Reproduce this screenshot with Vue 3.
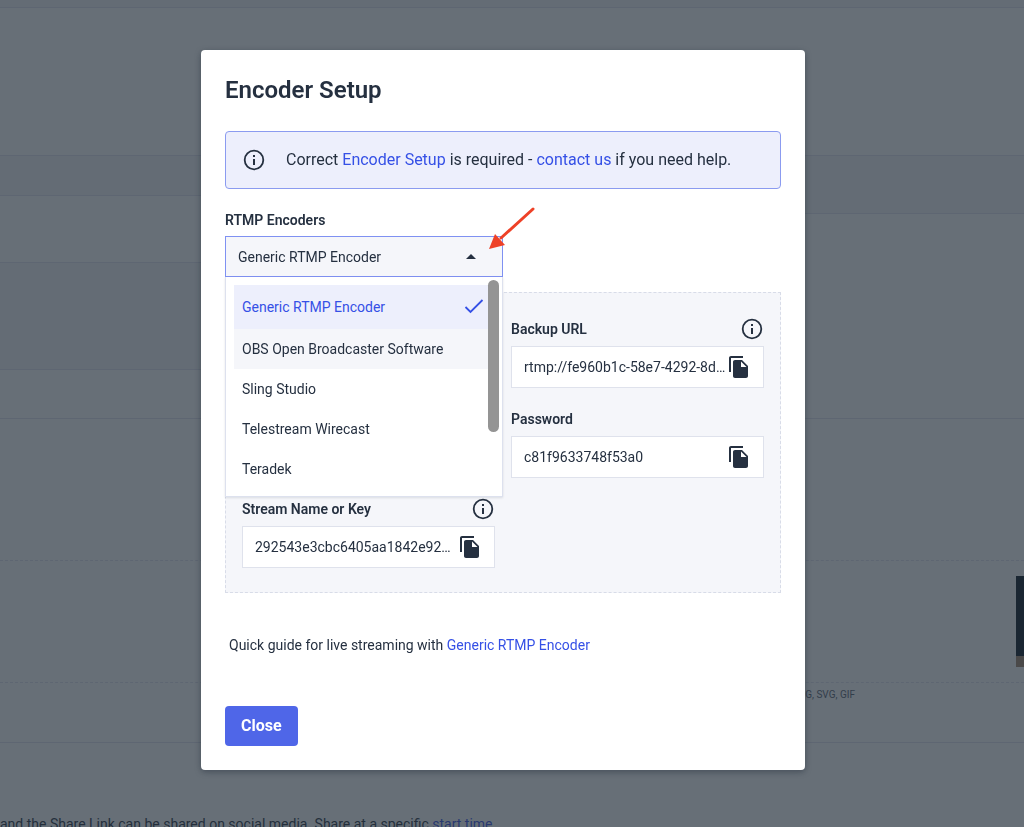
<script setup>
import { ref } from 'vue'

const encoders = [
  'Generic RTMP Encoder',
  'OBS Open Broadcaster Software',
  'Sling Studio',
  'Telestream Wirecast',
  'Teradek'
]
const selected = ref(encoders[0])
const hovered = ref(encoders[1])

const fields = [
  { id: 'backup', label: 'Backup URL', value: 'rtmp://fe960b1c-58e7-4292-8d…', info: true },
  { id: 'password', label: 'Password', value: 'c81f9633748f53a0', info: false },
  { id: 'stream', label: 'Stream Name or Key', value: '292543e3cbc6405aa1842e92…', info: true }
]
</script>

<template>
  <div class="screen">
    <div class="page">
      <div class="strip tint"></div>
      <div class="strip intro"></div>
      <div class="columns">
        <div class="column">
          <div class="strip row-a tint"></div>
          <div class="strip row-b"></div>
          <div class="strip row-c tint"></div>
          <div class="strip row-d"></div>
        </div>
        <div class="column">
          <div class="strip row-e tint"></div>
          <div class="strip row-f"></div>
        </div>
      </div>
      <div class="strip dashed row-g"></div>
      <div class="strip dashed media"><div class="thumb"></div></div>
      <div class="strip formats"><span>G, SVG, GIF</span></div>
      <p class="share">and the Share Link can be shared on social media. Share at a specific <a href="#">start time</a></p>
    </div>

    <div class="overlay">
      <section class="modal" role="dialog" aria-modal="true" aria-labelledby="dialog-title">
        <h1 id="dialog-title">Encoder Setup</h1>

        <div class="notice">
          <svg class="icon" viewBox="0 0 24 24" aria-hidden="true">
            <circle cx="12" cy="12" r="9.300" fill="none" stroke="currentColor" stroke-width="1.800" />
            <path d="M11 7h2v2h-2zM11 11h2v6h-2z" fill="currentColor" />
          </svg>
          <p>Correct <a href="#">Encoder Setup</a> is required - <a href="#">contact us</a> if you need help.</p>
        </div>

        <label class="label" for="encoder">RTMP Encoders</label>
        <div class="picker">
          <select id="encoder" v-model="selected">
            <option v-for="name in encoders" :key="name">{{ name }}</option>
          </select>
          <svg class="caret" viewBox="0 0 10 5" aria-hidden="true"><path d="M0 5l5-5 5 5z" fill="currentColor" /></svg>
          <div class="menu">
            <ul>
              <li v-for="name in encoders" :key="name">
                <button
                  type="button"
                  class="choice"
                  :class="{ chosen: name === selected, hovered: name === hovered && name !== selected }"
                  @mouseenter="hovered = name"
                  @click="selected = name"
                >
                  <span>{{ name }}</span>
                  <svg v-if="name === selected" class="icon" viewBox="0 0 24 24" aria-hidden="true">
                    <path d="M3.500 12l5 5L20.500 5" fill="none" stroke="currentColor" stroke-width="1.800" />
                  </svg>
                </button>
              </li>
            </ul>
            <div class="thumb-bar"></div>
          </div>
          <svg class="arrow" viewBox="0 0 46 44" aria-hidden="true">
            <path d="M44 2L12 31" stroke="#ee4127" stroke-width="3" stroke-linecap="round" />
            <path d="M0 42L6 27L16 38z" fill="#ee4127" />
          </svg>
        </div>

        <div class="panel">
          <div v-for="field in fields" :key="field.id" class="field" :class="field.id">
            <div class="field-head">
              <label class="label" :for="field.id">{{ field.label }}</label>
              <button v-if="field.info" type="button" class="icon-button" :aria-label="'About ' + field.label">
                <svg class="icon" viewBox="0 0 24 24">
                  <circle cx="12" cy="12" r="9.300" fill="none" stroke="currentColor" stroke-width="1.800" />
                  <path d="M11 7h2v2h-2zM11 11h2v6h-2z" fill="currentColor" />
                </svg>
              </button>
            </div>
            <div class="box">
              <input :id="field.id" type="text" readonly :value="field.value" />
              <button type="button" class="icon-button" :aria-label="'Copy ' + field.label">
                <svg class="icon" viewBox="0 0 24 24">
                  <path fill="currentColor" d="M16 1H4c-1.100 0-2 .9-2 2v14h2V3h12V1zm-1 4l6 6v10c0 1.100-.9 2-2 2H7.990C6.890 23 6 22.100 6 21l.01-14c0-1.100.89-2 1.990-2h7zm-1 7h5.500L14 6.500V12z" />
                </svg>
              </button>
            </div>
          </div>
        </div>

        <p class="guide">Quick guide for live streaming with <a href="#">{{ selected }}</a></p>

        <button type="button" class="close">Close</button>
      </section>
    </div>
  </div>
</template>

<style>
body {
  margin: 0;
}
</style>

<style scoped>
* {
  box-sizing: border-box;
}

.screen {
  height: 100vh;
  overflow: hidden;
  font-family: Roboto, "Liberation Sans", sans-serif;
  font-size: 14px;
  line-height: 20px;
  color: #253040;
}

h1,
p,
ul {
  margin: 0;
  padding: 0;
}

a {
  color: #3550e6;
  text-decoration: none;
}

button,
input,
select {
  font: inherit;
  color: inherit;
}

.icon {
  display: block;
  flex: none;
  width: 24px;
  height: 24px;
}

.page {
  height: 100%;
  overflow: hidden;
  background: #fff;
}

.strip {
  min-height: 8px;
  border-bottom: 1px solid #e2e2ee;
}

.tint {
  background: #f5f6f8;
}

.dashed {
  border-bottom-style: dashed;
}

.columns {
  display: grid;
  grid-template-columns: 1fr 1fr;
}

.intro { height: 148px; }
.row-a { height: 40px; }
.row-b { height: 67px; }
.row-c { height: 107px; }
.row-d { height: 49px; }
.row-e { height: 58px; }
.row-f { height: 205px; }
.row-g { height: 142px; }

.media {
  display: flex;
  justify-content: flex-end;
  padding: 15px 0;
}

.thumb {
  width: 8px;
  height: 91px;
  background: linear-gradient(#06121e 80px, #a08468 80px);
}

.formats {
  height: 60px;
  padding: 2px 169px 0 0;
  text-align: right;
  font-size: 10px;
  color: #566070;
}

.share {
  margin-top: 71px;
  white-space: nowrap;
}

.overlay {
  position: fixed;
  inset: 0;
  display: flex;
  align-items: flex-start;
  justify-content: center;
  padding: 50px 18px 50px 0;
  background: rgba(36, 47, 59, 0.695);
}

.modal {
  width: 604px;
  max-width: 100%;
  padding: 24px;
  border-radius: 4px;
  background: #fff;
  box-shadow: 0 2px 6px rgba(20, 30, 45, 0.4);
}

h1 {
  font-size: 24px;
  line-height: 32px;
  font-weight: 600;
}

.notice {
  display: flex;
  align-items: center;
  gap: 20px;
  margin-top: 25px;
  padding: 16px;
  border: 1px solid #8b9bf0;
  border-radius: 4px;
  background: #edeffc;
  font-size: 16px;
  line-height: 24px;
}

.label {
  display: block;
  font-weight: 600;
}

.notice + .label {
  margin: 21px 0 6px;
}

.picker {
  position: relative;
  width: 278px;
}

select {
  display: block;
  width: 100%;
  height: 41px;
  padding: 0 40px 0 12px;
  border: 1px solid #7f91f2;
  border-radius: 0;
  outline: none;
  appearance: none;
  background: #f5f6fa;
}

.caret {
  position: absolute;
  top: 18px;
  right: 27px;
  width: 10px;
  height: 5px;
}

.menu {
  position: absolute;
  top: 100%;
  left: 0;
  right: 0;
  z-index: 2;
  height: 220px;
  padding: 8px;
  border: 1px solid #dde1ee;
  border-top: 0;
  background: #fff;
  box-shadow: 0 1px 2px rgba(37, 48, 64, 0.12);
}

ul {
  list-style: none;
}

.choice {
  display: flex;
  align-items: center;
  justify-content: space-between;
  width: 100%;
  min-height: 40px;
  padding: 8px;
  border: 0;
  background: none;
  text-align: left;
}

.choice.chosen {
  min-height: 44px;
  background: #edeffc;
  color: #3550e6;
}

.choice.hovered {
  background: #f5f6fa;
}

.thumb-bar {
  position: absolute;
  top: 3px;
  right: 3px;
  width: 11px;
  height: 152px;
  border-radius: 6px;
  background: #949494;
}

.arrow {
  position: absolute;
  top: -29px;
  left: 264px;
  z-index: 3;
  width: 46px;
  height: 44px;
}

.panel {
  display: grid;
  grid-template-columns: 1fr 1fr;
  gap: 19px 16px;
  margin-top: 15px;
  padding: 24px 16px;
  border: 1px dashed #d8dce8;
  background: #f5f6fa;
}

.backup { grid-area: 1 / 2; }
.password { grid-area: 2 / 2; }
.stream { grid-area: 3 / 1; }

.field-head {
  display: flex;
  align-items: center;
  justify-content: space-between;
  height: 24px;
  margin-bottom: 5px;
}

.box {
  display: flex;
  align-items: center;
  height: 42px;
  padding: 0 12px;
  border: 1px solid #dfe2ec;
  background: #fff;
}

input {
  flex: 1;
  min-width: 0;
  padding: 0;
  border: 0;
  outline: none;
  background: none;
}

.icon-button {
  flex: none;
  padding: 0;
  border: 0;
  background: none;
}

.guide {
  margin: 42px 0 51px;
  padding-left: 4px;
}

.close {
  display: block;
  height: 40px;
  padding: 0 16px;
  border: 0;
  border-radius: 4px;
  background: #4f66e8;
  color: #fff;
  font-size: 16px;
  font-weight: 700;
}
</style>
